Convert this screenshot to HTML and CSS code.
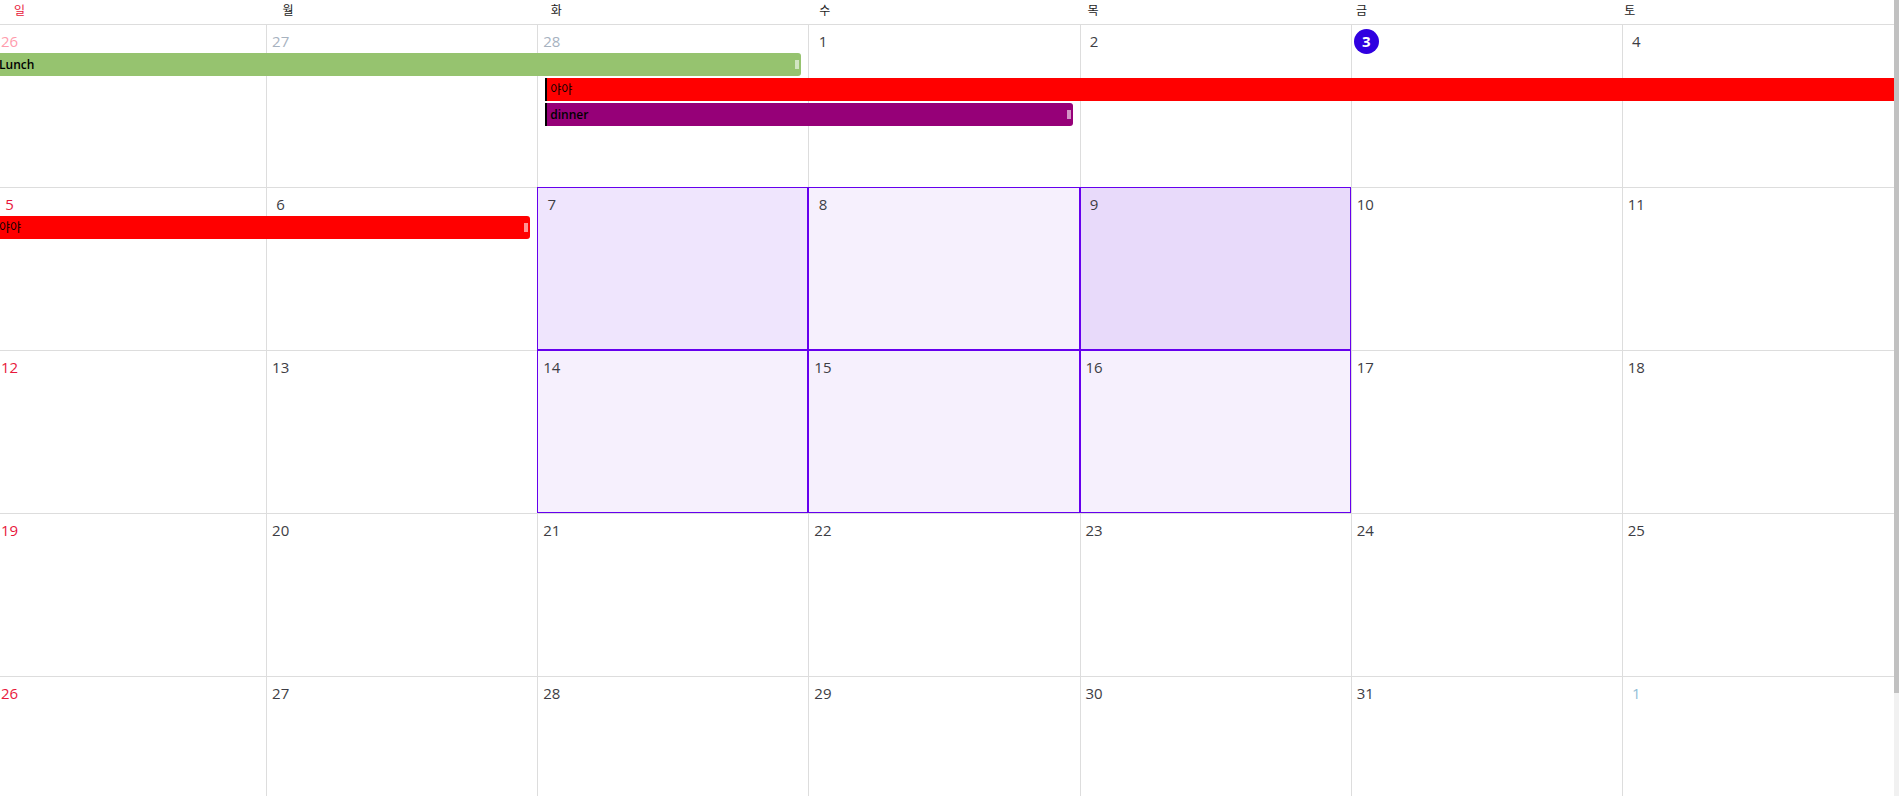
FILE: index.html
```html
<!DOCTYPE html>
<html lang="ko">
<head>
<meta charset="utf-8">
<title>Calendar</title>
<link rel="stylesheet" href="styles.css">
</head>
<body>
<div class="calendar">
  <div class="dow-row">
    <div class="dow sun">일</div>
    <div class="dow">월</div>
    <div class="dow">화</div>
    <div class="dow">수</div>
    <div class="dow">목</div>
    <div class="dow">금</div>
    <div class="dow">토</div>
  </div>

  <div class="week">
    <div class="days">
      <div class="day sun other"><span class="num">26</span></div>
      <div class="day other"><span class="num">27</span></div>
      <div class="day other"><span class="num">28</span></div>
      <div class="day"><span class="num">1</span></div>
      <div class="day"><span class="num">2</span></div>
      <div class="day today"><span class="num">3</span></div>
      <div class="day"><span class="num">4</span></div>
    </div>
    <div class="events">
      <div class="ev green end r1 c1-4">Lunch</div>
      <div class="ev red start ko r2 c3-8">야야</div>
      <div class="ev purple start end r3 c3-5">dinner</div>
    </div>
  </div>

  <div class="week">
    <div class="days">
      <div class="day sun"><span class="num">5</span></div>
      <div class="day"><span class="num">6</span></div>
      <div class="day sel sel-a"><span class="num">7</span></div>
      <div class="day sel sel-b"><span class="num">8</span></div>
      <div class="day sel sel-c"><span class="num">9</span></div>
      <div class="day"><span class="num">10</span></div>
      <div class="day"><span class="num">11</span></div>
    </div>
    <div class="events">
      <div class="ev red end ko r1 c1-3">야야</div>
    </div>
  </div>

  <div class="week">
    <div class="days">
      <div class="day sun"><span class="num">12</span></div>
      <div class="day"><span class="num">13</span></div>
      <div class="day sel sel-b"><span class="num">14</span></div>
      <div class="day sel sel-b"><span class="num">15</span></div>
      <div class="day sel sel-b"><span class="num">16</span></div>
      <div class="day"><span class="num">17</span></div>
      <div class="day"><span class="num">18</span></div>
    </div>
  </div>

  <div class="week">
    <div class="days">
      <div class="day sun"><span class="num">19</span></div>
      <div class="day"><span class="num">20</span></div>
      <div class="day"><span class="num">21</span></div>
      <div class="day"><span class="num">22</span></div>
      <div class="day"><span class="num">23</span></div>
      <div class="day"><span class="num">24</span></div>
      <div class="day"><span class="num">25</span></div>
    </div>
  </div>

  <div class="week">
    <div class="days">
      <div class="day sun"><span class="num">26</span></div>
      <div class="day"><span class="num">27</span></div>
      <div class="day"><span class="num">28</span></div>
      <div class="day"><span class="num">29</span></div>
      <div class="day"><span class="num">30</span></div>
      <div class="day"><span class="num">31</span></div>
      <div class="day next"><span class="num">1</span></div>
    </div>
  </div>
</div>

<div class="scrollbar"><div class="thumb"></div></div>
</body>
</html>
```

FILE: styles.css
```css
* {
  box-sizing: border-box;
}

html,
body {
  margin: 0;
  padding: 0;
  overflow: hidden;
  background: #ffffff;
}

body {
  font-family: "Open Sans", "Noto Sans CJK KR", sans-serif;
  color: #333333;
}

.calendar {
  width: 1898px;
  margin-left: -4px;
}

/* weekday header */
.dow-row {
  display: grid;
  grid-template-columns: repeat(7, 268.4px);
  height: 25px;
  padding-left: 18px;
  border-bottom: 1px solid #dddddd;
}

.dow {
  font-family: "Noto Sans CJK KR", sans-serif;
  font-size: 12px;
  line-height: 20px;
  color: #222222;
}

.dow.sun {
  color: #e8173b;
}

/* weeks */
.week {
  position: relative;
  height: 163px;
}

.days {
  display: grid;
  grid-template-columns: repeat(7, 1fr);
  height: 100%;
}

.day {
  border-right: 1px solid #dddddd;
  border-bottom: 1px solid #dddddd;
  padding: 4px 0 0 1px;
}

.day:last-child {
  border-right: none;
}

.num {
  display: flex;
  align-items: center;
  justify-content: center;
  width: 25px;
  height: 25px;
  font-size: 15px;
  line-height: 1;
  color: #3d3d44;
}

.day.sun .num {
  color: #e8183c;
}

.day.other .num {
  color: #a7b2bf;
}

.day.sun.other .num {
  color: #ff9cad;
}

.day.next .num {
  color: #92bdd6;
}

.day.today .num {
  margin-left: 1px;
  background: #3000e0;
  color: #ffffff;
  border-radius: 50%;
  font-weight: 700;
  font-size: 15px;
}

/* selected range */
.sel {
  position: relative;
}

.sel::after {
  content: "";
  position: absolute;
  top: -1px;
  left: -1px;
  right: 0;
  bottom: 0;
  border: 1px solid #6600ee;
  pointer-events: none;
}

.sel-a {
  background: #efe5fd;
}

.sel-b {
  background: #f6f0fd;
}

.sel-c {
  background: #e8dafa;
}

/* events */
.events {
  position: absolute;
  top: 28px;
  left: 0;
  right: 0;
  display: grid;
  grid-template-columns: repeat(7, 1fr);
  grid-auto-rows: 23px;
  row-gap: 2px;
  z-index: 2;
}

.ev {
  position: relative;
  overflow: hidden;
  white-space: nowrap;
  padding-left: 3px;
  font-size: 12px;
  font-weight: 600;
  line-height: 23px;
  color: #000000;
}

.ev.ko {
  font-weight: 400;
}

.ev.start {
  margin-left: 7px;
  padding-left: 3px;
  border-left: 2px solid #000000;
}

.ev.end {
  margin-right: 8px;
  border-radius: 0 3px 3px 0;
}

.ev.end::after {
  content: "";
  position: absolute;
  right: 2px;
  top: 7px;
  width: 4px;
  height: 9px;
  background-image: radial-gradient(circle, rgba(255, 255, 255, 0.6) 0.7px, transparent 0.9px);
  background-size: 2px 2px;
}

.green {
  background: #96c36f;
}

.red {
  background: #ff0000;
}

.purple {
  background: #960078;
}

.r1 { grid-row: 1; }
.r2 { grid-row: 2; }
.r3 { grid-row: 3; }

.c1-4 { grid-column: 1 / 4; }
.c1-3 { grid-column: 1 / 3; }
.c3-8 { grid-column: 3 / 8; }
.c3-5 { grid-column: 3 / 5; }

/* thin scrollbar at the right edge */
.scrollbar {
  position: fixed;
  top: 0;
  right: 0;
  width: 5px;
  height: 100%;
  background: #f1f1f1;
  z-index: 5;
}

.thumb {
  height: 693px;
  background: #c1c1c1;
}
```
